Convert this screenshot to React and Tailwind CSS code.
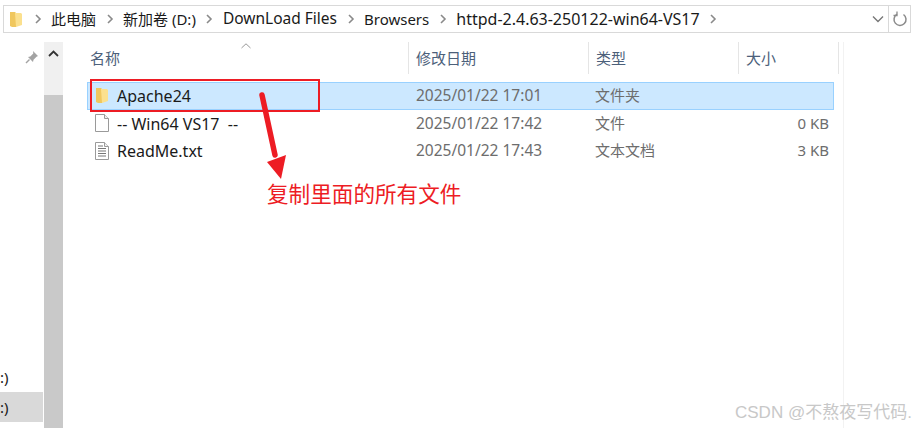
const font = { fontFamily: '"Noto Sans","Noto Sans CJK SC",sans-serif' };

function Chevron() {
  return (
    <svg width="8" height="12" viewBox="0 0 8 12" className="shrink-0 mx-[9.5px]">
      <path d="M2 2l4 4-4 4" fill="none" stroke="#8a8a8a" strokeWidth="1.6" />
    </svg>
  );
}

function Folder({ className }) {
  return (
    <svg width="14" height="17" viewBox="0 0 14 17" className={className}>
      <path d="M1 1h5l1 1v14H3l-2-1z" fill="#f0c75e" />
      <path d="M6 2h6l1 1v11l-6 2z" fill="#fbe08e" />
    </svg>
  );
}

function FileIcon({ lines }) {
  return (
    <svg width="16" height="20" viewBox="0 0 16 20" className="shrink-0">
      <path d="M1.5 1.5h9l4 4v13h-13z" fill="#fff" stroke="#9a9a9a" />
      <path d="M10.500 1.500v4h4" fill="#f0f0f0" stroke="#9a9a9a" />
      {lines && (
        <path d="M4 5h5M4 7.500h8M4 10h8M4 12.500h8M4 15h8" stroke="#777" strokeWidth="1" />
      )}
    </svg>
  );
}

function Row({ icon, name, date, type, size, selected }) {
  return (
    <div className={`flex items-center h-[27.5px] w-[747px] leading-none ${selected ? 'bg-[#cce8ff] border border-[#99d1ff]' : 'border border-transparent'}`}>
      <div className="w-[328px] flex items-center pl-[6px] gap-[7px] text-[16px] text-[#1a1a1a] whitespace-pre">
        <span className="w-[16px] flex justify-center shrink-0">{icon}</span>
        <span className="pt-[1px]">{name}</span>
      </div>
      <div className="w-[179px] text-[15.5px] text-[#6d6d6d] whitespace-pre">{date}</div>
      <div className="w-[150px] text-[15px] text-[#6d6d6d]">{type}</div>
      <div className="flex-1 text-right pr-[4px] text-[15px] text-[#6d6d6d]">{size}</div>
    </div>
  );
}

function Head({ w, pad, label, children }) {
  return (
    <div className={`${w} ${pad} h-[32px] flex items-center text-[15px] text-[#4c607a] border-r border-[#e5e5e5] relative`}>
      {label}
      {children}
    </div>
  );
}

export default function App() {
  return (
    <div style={font} className="w-[916px] h-[428px] bg-white overflow-hidden relative flex flex-col">
      {/* address bar */}
      <div className="mt-[5px] ml-[3px] w-[908px] h-[28px] border border-[#d9d9d9] flex items-center shrink-0 text-[15px] text-[#1a1a1a] whitespace-nowrap">
        <Folder className="ml-[5px] mr-[1px] shrink-0" />
        <Chevron />
        <span>此电脑</span>
        <Chevron />
        <span>新加卷 (D:)</span>
        <Chevron />
        <span className="text-[15.5px]">DownLoad Files</span>
        <Chevron />
        <span>Browsers</span>
        <Chevron />
        <span className="text-[16px]">httpd-2.4.63-250122-win64-VS17</span>
        <Chevron />
        <div className="ml-auto flex items-center h-full">
          <svg width="12" height="8" viewBox="0 0 12 8" className="mr-[4px]">
            <path d="M1 1.500l5 5 5-5" fill="none" stroke="#777" strokeWidth="1.4" />
          </svg>
          <div className="h-full w-[22px] border-l border-[#d9d9d9] flex items-center justify-center">
            <svg width="16" height="16" viewBox="0 0 16 16">
              <path d="M5 3.200A6 6 0 1 0 11.500 3.500" fill="none" stroke="#8a8a8a" strokeWidth="1.5" />
              <path d="M4 0.500V4.500H0.500" fill="none" stroke="#8a8a8a" strokeWidth="1.3" transform="translate(1 0)" />
            </svg>
          </div>
        </div>
      </div>

      {/* body */}
      <div className="flex flex-1 mt-[9px] min-h-0">
        {/* nav */}
        <div className="w-[44px] shrink-0 flex flex-col">
          <div className="h-[30px] flex items-start justify-end pr-[5px] pt-[8px]">
            <svg width="14" height="14" viewBox="0 0 14 14">
              <path d="M8 1l5 5-1.500.7-3 3-.5 2.300-5-5 2.300-.5 3-3z" fill="#a3a3a3" />
              <path d="M4.500 9.500L1 13" stroke="#a3a3a3" strokeWidth="1.500" />
            </svg>
          </div>
          <div className="mt-auto mb-[6px] flex flex-col text-[15px] text-[#1a1a1a] leading-none">
            <div className="h-[30px] flex items-center">
              <span>:)</span>
            </div>
            <div className="h-[30px] w-[43px] bg-[#d9d9d9] flex items-center">
              <span>:)</span>
            </div>
          </div>
        </div>

        {/* scrollbar */}
        <div className="w-[19px] shrink-0 bg-[#c9c9c9] flex flex-col">
          <div className="h-[53px] bg-[#f0f0f0] flex justify-center pt-[8px]">
            <svg width="11" height="8" viewBox="0 0 11 8">
              <path d="M1 6l4.500-4.500L10 6" fill="none" stroke="#333" strokeWidth="1.800" />
            </svg>
          </div>
        </div>

        {/* list */}
        <div className="w-[781px] border-r border-[#f2f2f2] pl-[24px]">
          <div className="flex h-[30px] relative">
            <Head w="w-[322px]" pad="pl-[3px]" label="名称">
              <svg width="10" height="6" viewBox="0 0 10 6" className="absolute left-[154px] top-[1px]">
                <path d="M0.500 5L5 0.800 9.500 5" fill="none" stroke="#999" />
              </svg>
            </Head>
            <Head w="w-[180px]" pad="pl-[7px]" label="修改日期" />
            <Head w="w-[150px]" pad="pl-[7px]" label="类型" />
            <Head w="w-[100px]" pad="pl-[7px]" label="大小" />
          </div>
          <div className="mt-[10px] flex flex-col">
            <Row selected icon={<Folder className="block" />} name="Apache24" date="2025/01/22 17:01" type="文件夹" size="" />
            <Row icon={<FileIcon />} name="-- Win64 VS17  --" date="2025/01/22 17:42" type="文件" size="0 KB" />
            <Row icon={<FileIcon lines />} name="ReadMe.txt" date="2025/01/22 17:43" type="文本文档" size="3 KB" />
          </div>
        </div>
      </div>

      {/* annotations */}
      <div className="absolute left-[90px] top-[79px] w-[230px] h-[33px] border-2 border-[#ed1c24]" />
      <svg className="absolute left-[255px] top-[92px]" width="40" height="92" viewBox="0 0 40 92">
        <path d="M7 3L20 63" stroke="#ed1c24" strokeWidth="5.500" strokeLinecap="round" fill="none" />
        <path d="M12 70L31 63 26 87z" fill="#ed1c24" />
      </svg>
      <div className="absolute left-[267px] top-[179px] text-[21.6px] leading-[30px] text-[#ed1c24] whitespace-nowrap">复制里面的所有文件</div>
      <div className="absolute left-[735px] top-[402px] text-[17px] leading-[22px] text-[#c8c8c8] whitespace-nowrap" style={{ fontFamily: '"Liberation Sans","Noto Sans CJK SC",sans-serif' }}>CSDN @不熬夜写代码.</div>
    </div>
  );
}
